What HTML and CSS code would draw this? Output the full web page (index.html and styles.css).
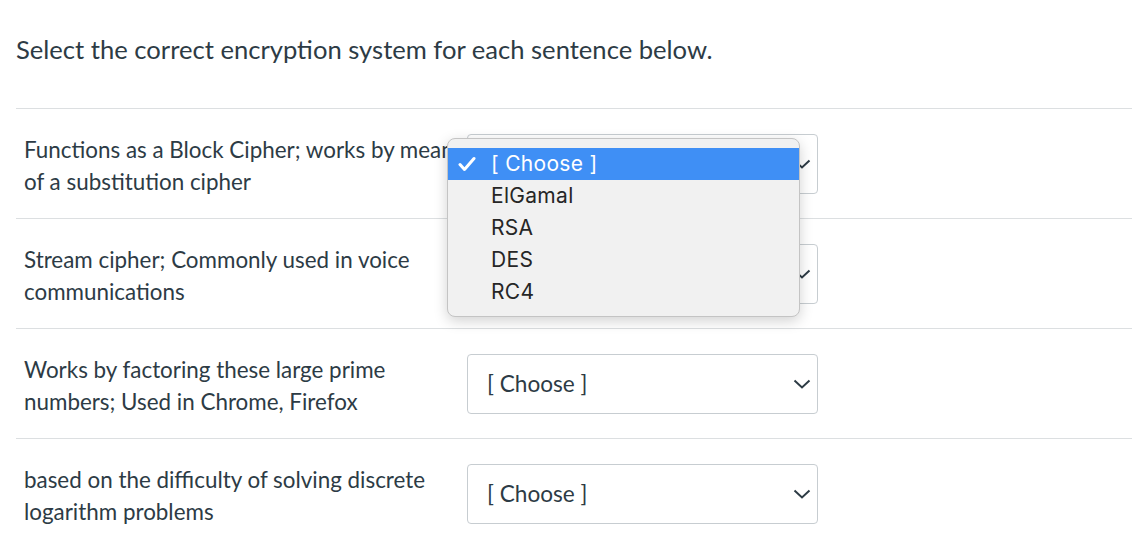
FILE: index.html
```html
<!DOCTYPE html>
<html>
<head>
<meta charset="UTF-8">
<title>Matching Question</title>
<link rel="stylesheet" href="styles.css">
</head>
<body>

  <div class="question-box">
    <p class="prompt">Select the correct encryption system for each sentence below.</p>

    <div class="answers">
      <div class="answer-row">
        <div class="question">Functions as a Block Cipher; works by means of a substitution cipher</div>
        <div class="select-wrap">
          <div class="select">
            <span>[ Choose ]</span>
            <svg class="chevron" width="18" height="10" viewBox="0 0 18 10"><path d="M1.5 1.5 L9 8.5 L16.5 1.5" fill="none" stroke="#2d3b45" stroke-width="2"/></svg>
          </div>
          <!-- open option list, drawn over the rows below -->
          <ul class="menu">
            <li class="selected">
              <svg class="tick" width="18" height="16" viewBox="0 0 18 16"><path d="M2 8.5 L6.5 13.5 L16 2.5" fill="none" stroke="#fff" stroke-width="3" stroke-linecap="round" stroke-linejoin="round"/></svg>
              [ Choose ]
            </li>
            <li>ElGamal</li>
            <li>RSA</li>
            <li>DES</li>
            <li>RC4</li>
          </ul>
        </div>
      </div>

      <div class="answer-row">
        <div class="question">Stream cipher; Commonly used in voice communications</div>
        <div class="select-wrap">
          <div class="select">
            <span>[ Choose ]</span>
            <svg class="chevron" width="18" height="10" viewBox="0 0 18 10"><path d="M1.5 1.5 L9 8.5 L16.5 1.5" fill="none" stroke="#2d3b45" stroke-width="2"/></svg>
          </div>
        </div>
      </div>

      <div class="answer-row">
        <div class="question">Works by factoring these large prime numbers; Used in Chrome, Firefox</div>
        <div class="select-wrap">
          <div class="select">
            <span>[ Choose ]</span>
            <svg class="chevron" width="18" height="10" viewBox="0 0 18 10"><path d="M1.5 1.5 L9 8.5 L16.5 1.5" fill="none" stroke="#2d3b45" stroke-width="2"/></svg>
          </div>
        </div>
      </div>

      <div class="answer-row">
        <div class="question">based on the difficulty of solving discrete logarithm problems</div>
        <div class="select-wrap">
          <div class="select">
            <span>[ Choose ]</span>
            <svg class="chevron" width="18" height="10" viewBox="0 0 18 10"><path d="M1.5 1.5 L9 8.5 L16.5 1.5" fill="none" stroke="#2d3b45" stroke-width="2"/></svg>
          </div>
        </div>
      </div>
    </div>
  </div>

</body>
</html>
```

FILE: styles.css
```css
body {
  margin: 0;
  padding: 0 0 0 16px;
  font-family: Lato, "Open Sans", sans-serif;
  color: #2d3b45;
  background: #fff;
}

.prompt {
  margin: 33px 0 42px;
  font-size: 25.6px;
  line-height: 33px;
}

.answer-row {
  display: flex;
  align-items: center;
  height: 109px;
  padding-left: 8px;
  border-top: 1px solid #dcdfe1;
}

.question {
  flex: 0 0 443px;
  padding-top: 4px;
  font-size: 22.4px;
  line-height: 32px;
}

.select-wrap {
  position: relative;
}

.select {
  display: flex;
  align-items: center;
  justify-content: space-between;
  box-sizing: border-box;
  width: 351px;
  height: 60px;
  padding: 0 6px 0 19px;
  border: 1px solid #c7cdd1;
  border-radius: 4px;
  background: #fff;
  font-size: 22.6px;
}

.chevron {
  display: block;
}

/* native-looking popup list */
.menu {
  position: absolute;
  left: -20px;
  top: 4px;
  z-index: 5;
  box-sizing: border-box;
  width: 353px;
  margin: 0;
  padding: 9px 0 8px;
  list-style: none;
  background: #f1f1f1;
  border: 1px solid #c4c4c4;
  border-radius: 8px;
  box-shadow: 0 4px 14px rgba(0,0,0,0.18);
  font-family: Inter, "Liberation Sans", sans-serif;
  font-size: 21px;
  letter-spacing: 0.3px;
  color: #262626;
}

.menu li {
  position: relative;
  height: 32px;
  line-height: 32px;
  padding-left: 43px;
}

.menu li.selected {
  background: #3f8ff5;
  color: #fff;
}

.menu .tick {
  position: absolute;
  left: 10px;
  top: 8px;
}
```
